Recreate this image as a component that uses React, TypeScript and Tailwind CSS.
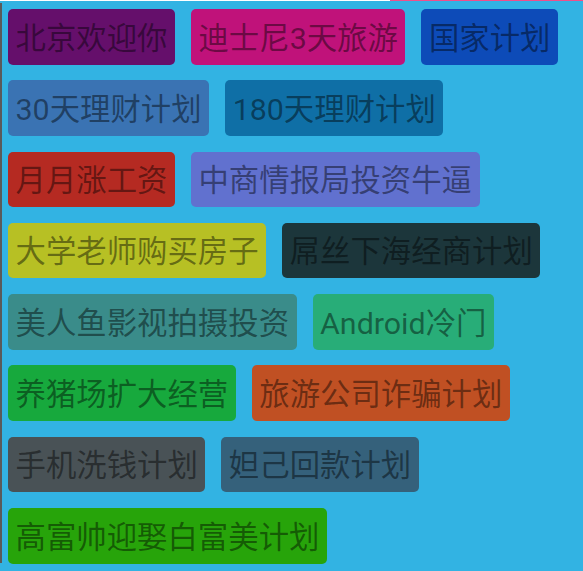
const tags: { label: string; bg: string }[] = [
  { label: "北京欢迎你", bg: "bg-[#650f6b]" },
  { label: "迪士尼3天旅游", bg: "bg-[#c0127a]" },
  { label: "国家计划", bg: "bg-[#0d4bb8]" },
  { label: "30天理财计划", bg: "bg-[#3a73b3]" },
  { label: "180天理财计划", bg: "bg-[#0f6fa6]" },
  { label: "月月涨工资", bg: "bg-[#b52a22]" },
  { label: "中商情报局投资牛逼", bg: "bg-[#6171cf]" },
  { label: "大学老师购买房子", bg: "bg-[#b7c024]" },
  { label: "屌丝下海经商计划", bg: "bg-[#1c363b]" },
  { label: "美人鱼影视拍摄投资", bg: "bg-[#3a8c8a]" },
  { label: "Android冷门", bg: "bg-[#28ad78]" },
  { label: "养猪场扩大经营", bg: "bg-[#17a93d]" },
  { label: "旅游公司诈骗计划", bg: "bg-[#c05023]" },
  { label: "手机洗钱计划", bg: "bg-[#495256]" },
  { label: "妲己回款计划", bg: "bg-[#35617b]" },
  { label: "高富帅迎娶白富美计划", bg: "bg-[#27a40a]" },
];

export default function App() {
  return (
    <div className="h-[571px] w-[583px] overflow-hidden bg-[#32b3e3] font-['Roboto','Noto_Sans_CJK_SC',sans-serif]">
      {/* status strip */}
      <div className="flex h-px">
        <div className="w-[390px] bg-white" />
        <div className="flex-1 bg-[#f0508a]" />
      </div>
      <div className="mt-[2px] h-[560px] border-l-2 border-[#5a5a5a] pl-[6px] pt-[6px]">
        <div className="flex flex-wrap gap-x-4 gap-y-[15.8px]">
          {tags.map((t) => (
            <span
              key={t.label}
              className={`flex h-[55.5px] items-center rounded-[5px] px-[7.5px] pt-1 text-[30.4px] leading-none whitespace-nowrap text-black/45 ${t.bg}`}
            >
              {t.label}
            </span>
          ))}
        </div>
      </div>
    </div>
  );
}
